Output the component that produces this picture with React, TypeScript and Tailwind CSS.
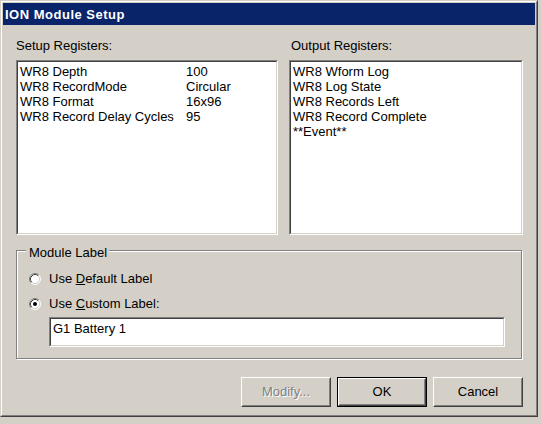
import React from 'react';

const setupRegisters = [
  { name: 'WR8 Depth', value: '100' },
  { name: 'WR8 RecordMode', value: 'Circular' },
  { name: 'WR8 Format', value: '16x96' },
  { name: 'WR8 Record Delay Cycles', value: '95' },
];

const outputRegisters = [
  'WR8 Wform Log',
  'WR8 Log State',
  'WR8 Records Left',
  'WR8 Record Complete',
  '**Event**',
];

// classic sunken 2px border (listbox / edit field)
function Sunken({ className, children }: { className?: string; children?: React.ReactNode }) {
  return (
    <div className={`border border-t-[#808080] border-l-[#808080] border-b-white border-r-white ${className ?? ''}`}>
      <div className="h-full border border-t-[#404040] border-l-[#404040] border-b-[#d4d0c8] border-r-[#d4d0c8] bg-white">
        {children}
      </div>
    </div>
  );
}

function Radio({ checked }: { checked?: boolean }) {
  return (
    <svg width="12" height="12" viewBox="0 0 12 12" className="shrink-0">
      <circle cx="6" cy="6" r="5" fill="#fff" />
      <path d="M2.11 9.89 A5.5 5.5 0 0 1 9.89 2.11" fill="none" stroke="#808080" strokeWidth="1" />
      <path d="M9.89 2.11 A5.5 5.5 0 0 1 2.11 9.89" fill="none" stroke="#ffffff" strokeWidth="1" />
      <path d="M2.82 9.18 A4.5 4.5 0 0 1 9.18 2.82" fill="none" stroke="#404040" strokeWidth="1" />
      <path d="M9.18 2.82 A4.5 4.5 0 0 1 2.82 9.18" fill="none" stroke="#d4d0c8" strokeWidth="1" />
      {checked && <circle cx="6" cy="6" r="2" fill="#000" />}
    </svg>
  );
}

function Button({ label, isDefault, disabled }: { label: string; isDefault?: boolean; disabled?: boolean }) {
  const inner = (
    <div className="h-full border border-t-white border-l-white border-b-[#404040] border-r-[#404040]">
      <div className="flex h-full items-center justify-center border border-t-[#d4d0c8] border-l-[#d4d0c8] border-b-[#808080] border-r-[#808080] pb-[1px]">
        <span className={disabled ? 'text-[#808080] [text-shadow:1px_1px_0_#fff]' : 'text-black'}>{label}</span>
      </div>
    </div>
  );
  return (
    <div className={`h-[30px] w-[90px] ${isDefault ? 'border border-black' : ''}`}>
      {inner}
    </div>
  );
}

export default function App() {
  return (
    <div className="min-h-[424px] bg-[#d4d0c8] font-['Liberation_Sans',Arial,sans-serif] text-[13px] leading-[15px] text-black">
      {/* window frame */}
      <div className="h-[417px] w-[538px] border border-t-[#d4d0c8] border-l-[#d4d0c8] border-b-[#404040] border-r-[#404040]">
        <div className="h-full border border-t-white border-l-white border-b-[#808080] border-r-[#808080] p-px">
          {/* title bar */}
          <div className="flex h-[22px] items-center bg-[#0a246a] pl-[2px] font-bold tracking-[0.5px] text-white">
            ION Module Setup
          </div>

          <div className="pl-[13px] pr-[12px] pt-[13px]">
            <div className="grid grid-cols-[262px_234px] gap-x-[11px]">
              <div>
                <div className="mb-[7px] h-[15px]">Setup Registers:</div>
                <Sunken className="h-[175px]">
                  <div className="pl-[2px] pt-[2px]">
                    {setupRegisters.map((r) => (
                      <div key={r.name} className="flex">
                        <span className="w-[166px]">{r.name}</span>
                        <span>{r.value}</span>
                      </div>
                    ))}
                  </div>
                </Sunken>
              </div>
              <div>
                <div className="mb-[7px] h-[15px] pl-[2px]">Output Registers:</div>
                <Sunken className="h-[175px]">
                  <div className="pl-[2px] pt-[2px]">
                    {outputRegisters.map((r) => (
                      <div key={r}>{r}</div>
                    ))}
                  </div>
                </Sunken>
              </div>
            </div>

            {/* Module Label group */}
            <div className="relative mr-[1px] mt-[15px] h-[109px] border border-[#808080] shadow-[inset_1px_1px_0_#fff,1px_1px_0_#fff]">
              <span className="absolute left-[9px] top-[-6px] bg-[#d4d0c8] pl-[3px] pr-[2px]">Module Label</span>
              <div className="pl-[12px] pt-[20px]">
                <div className="flex h-[15px] items-center gap-[8px]">
                  <Radio />
                  <span>
                    Use <span className="underline">D</span>efault Label
                  </span>
                </div>
                <div className="mt-[10px] flex h-[15px] items-center gap-[8px]">
                  <Radio checked />
                  <span>
                    Use <span className="underline">C</span>ustom Label:
                  </span>
                </div>
              </div>
              <div className="ml-[32px] mr-[16px] mt-[6px]">
                <Sunken className="h-[30px]">
                  <div className="pl-[2px] pt-[2px]">G1 Battery 1</div>
                </Sunken>
              </div>
            </div>

            {/* buttons */}
            <div className="mt-[18px] flex justify-end gap-[6px]">
              <Button label="Modify..." disabled />
              <Button label="OK" isDefault />
              <Button label="Cancel" />
            </div>
          </div>
        </div>
      </div>
    </div>
  );
}
